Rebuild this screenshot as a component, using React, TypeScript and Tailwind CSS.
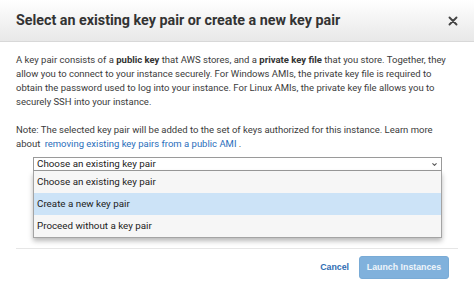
import { ChevronDown } from "lucide-react";

const options = [
  "Choose an existing key pair",
  "Create a new key pair",
  "Proceed without a key pair",
];

export default function App() {
  const selected = 1;

  return (
    <div className="w-[474px] h-[292px] bg-white overflow-hidden font-['Roboto',sans-serif] text-[#333]">
      {/* Header */}
      <div className="h-[42px] flex items-center justify-between pl-4 pr-[16px] bg-gradient-to-b from-[#ffffff] to-[#e8e8e8] border-b border-[#d8d8d8]">
        <h2 className="text-[14.3px] font-bold text-[#333] leading-none">
          Select an existing key pair or create a new key pair
        </h2>
        <svg width="10" height="10" viewBox="0 0 10 10" className="text-[#444]">
          <path d="M1.5 1.5 L8.5 8.5 M8.5 1.5 L1.5 8.5" stroke="currentColor" strokeWidth="1.9" strokeLinecap="round" />
        </svg>
      </div>

      {/* Body */}
      <div className="px-4 pt-[11px] text-[9.5px] leading-[14px] text-[#3b3b3b] whitespace-nowrap">
        <p>
          <span className="block">
            A key pair consists of a <b className="text-[#333]">public key</b> that AWS stores, and a{" "}
            <b className="text-[#333]">private key file</b> that you store. Together, they
          </span>
          <span className="block">
            allow you to connect to your instance securely. For Windows AMIs, the private key file is required to
          </span>
          <span className="block">
            obtain the password used to log into your instance. For Linux AMIs, the private key file allows you to
          </span>
          <span className="block">securely SSH into your instance.</span>
        </p>
        <p className="mt-[14px]">
          <span className="block">
            Note: The selected key pair will be added to the set of keys authorized for this instance. Learn more
          </span>
          <span className="block">
            about <a className="ml-[2px] text-[#2a6ebb]">removing existing key pairs from a public AMI</a> .
          </span>
        </p>

        {/* Select with open list */}
        <div className="ml-[17px] mt-[6px] w-[409px] text-[9.8px] leading-none text-[#222]">
          <div className="h-[14px] flex items-center justify-between border border-[#9a9a9a] bg-white pl-[3px] pr-[3px]">
            <span>Choose an existing key pair</span>
            <ChevronDown className="w-[7px] h-[7px] text-[#555]" strokeWidth={3.5} />
          </div>
          <div className="border border-t-0 border-[#a4a4a4] bg-[#f6f6f6] shadow-[0_3px_5px_rgba(0,0,0,0.28)]">
            {options.map((o, i) => (
              <div
                key={o}
                className={`h-[22px] flex items-center pl-[3px] ${i === selected ? "bg-[#cce3f7]" : ""}`}
              >
                {o}
              </div>
            ))}
          </div>
        </div>

        <div className="mt-[10px] border-t border-[#e6e6e6]" />

        {/* Footer */}
        <div className="flex items-center justify-end gap-[10px] pt-[7px] pr-[9px] font-['Liberation_Sans',Arial,sans-serif] text-[8.8px] font-bold leading-none">
          <span className="text-[#2f6db3]">Cancel</span>
          <button className="h-[23px] w-[90px] rounded-[3px] bg-[#80b1dc] text-[#eef5fb] border border-[#79abd6]">
            Launch Instances
          </button>
        </div>
      </div>
    </div>
  );
}
